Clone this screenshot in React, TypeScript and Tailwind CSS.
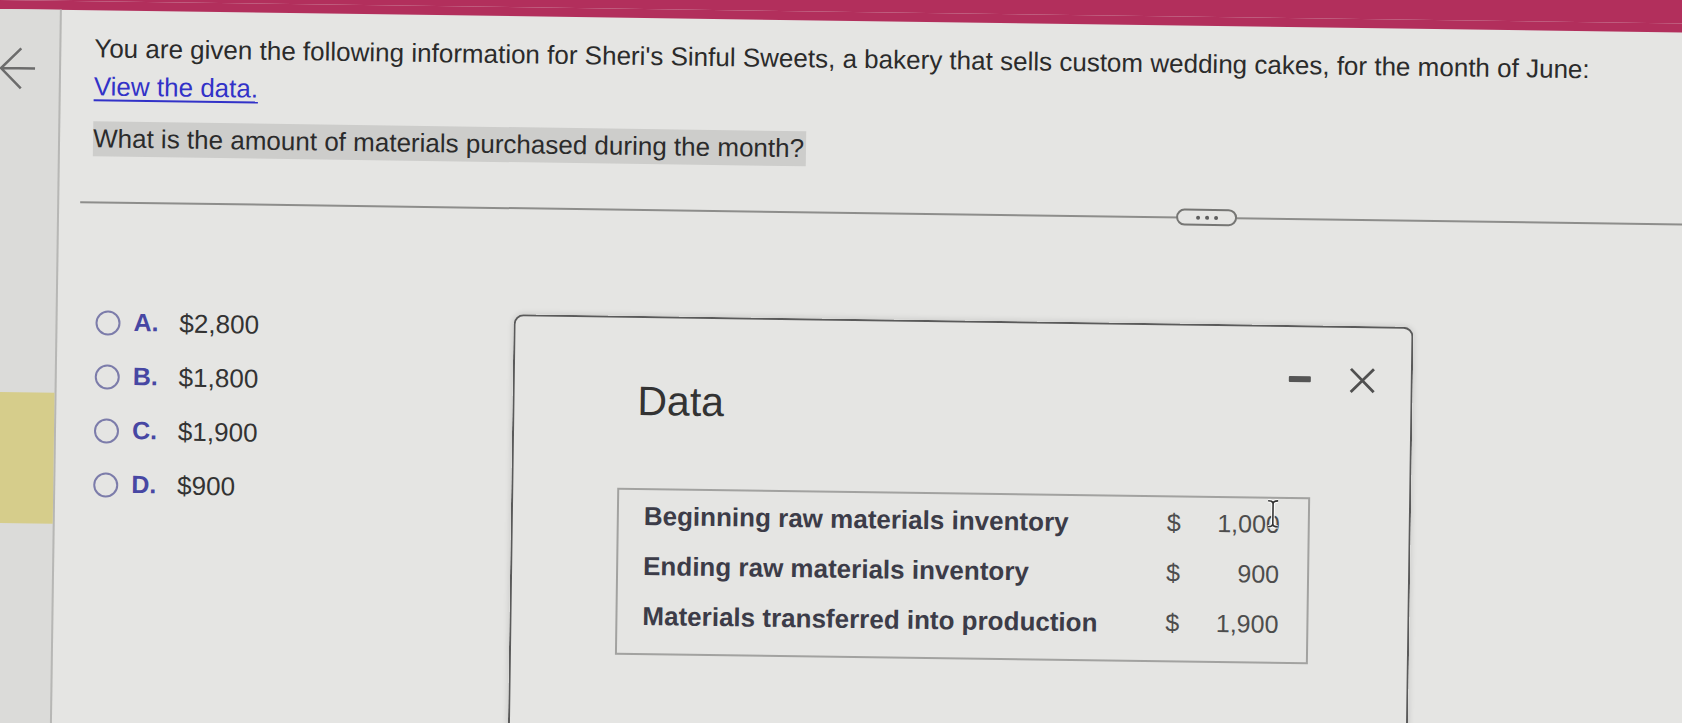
import React from "react";

const options = [
  { key: "A.", value: "$2,800" },
  { key: "B.", value: "$1,800" },
  { key: "C.", value: "$1,900" },
  { key: "D.", value: "$900" },
];

const rows = [
  { label: "Beginning raw materials inventory", amount: "1,000" },
  { label: "Ending raw materials inventory", amount: "900" },
  { label: "Materials transferred into production", amount: "1,900" },
];

export default function App() {
  return (
    <div className="h-[723px] w-[1682px] overflow-hidden bg-[#b22f5c] font-['Liberation_Sans',Arial,sans-serif]">
      {/* the photo is tilted a little, so the whole sheet is too */}
      <div className="h-[790px] w-[1780px] origin-top-left rotate-[0.8deg] bg-[#e5e5e3]">
        <div className="h-[9px] bg-[#b22f5c]" />

        <div className="flex h-[781px]">
          {/* ── Left rail ── */}
          <aside className="w-[62px] shrink-0 border-r-2 border-[#b7b7b5] bg-[#dbdbd9]">
            <svg width="40" height="44" viewBox="0 0 40 44" className="mt-[37px]">
              <path d="M2 22h34M22 2 2 22l20 20" fill="none" stroke="#6c6c6c" strokeWidth="2.5" />
            </svg>
            <div className="mt-[302px] h-[131px] bg-[#d6cd8b]" />
          </aside>

          {/* ── Question ── */}
          <main className="flex-1 pl-[33px] pt-[19px] text-[#2b2b2b]">
            <p className="whitespace-nowrap text-[26px] leading-[38px]">
              You are given the following information for Sheri's Sinful Sweets, a bakery that sells custom wedding cakes, for the month of June:
            </p>
            <a className="block w-fit text-[26px] leading-[38px] text-[#3232c8] underline decoration-2 underline-offset-[4px]">
              View the data.
            </a>
            <div className="mt-[16px]">
              <span className="inline-block bg-[#cdcdcb] pr-[2px] text-[26px] leading-[35px]">
                What is the amount of materials purchased during the month?
              </span>
            </div>

            <div className="relative -ml-[12px] mt-[45px] h-[2px] bg-[#8d8d8b]">
              <div className="absolute -top-[8px] left-[1096px] flex h-[17px] w-[61px] items-center justify-center gap-[5px] rounded-full border-2 border-[#767674] bg-[#e5e5e3]">
                <span className="size-[4px] rounded-full bg-[#5f5f5f]" />
                <span className="size-[4px] rounded-full bg-[#5f5f5f]" />
                <span className="size-[4px] rounded-full bg-[#5f5f5f]" />
              </div>
            </div>

            <div className="mt-[92px] flex items-start">
              {/* Choices */}
              <div className="w-[423px] shrink-0">
                {options.map((o) => (
                  <div key={o.key} className="flex h-[54px] items-center">
                    <span className="ml-[5px] size-[25px] rounded-full border-[2.5px] border-[#7c7caa]" />
                    <span className="ml-[13px] w-[46px] text-[25px] font-bold text-[#4747a3]">{o.key}</span>
                    <span className="text-[26px] text-[#333]">{o.value}</span>
                  </div>
                ))}
              </div>

              {/* Data dialog */}
              <div className="mt-[13px] h-[440px] w-[900px] shrink-0 rounded-t-[10px] border-2 border-b-0 border-[#5a5a5a] shadow-[0_0_6px_rgba(0,0,0,0.15)]">
                <div className="flex items-start justify-between">
                  <h2 className="pl-[123px] pt-[59px] text-[41px] leading-[48px] text-[#333]">Data</h2>
                  <div className="mt-[37px] flex h-[30px] items-center gap-[38px] pr-[35px]">
                    <span className="h-[6px] w-[22px] rounded-[1px] bg-[#555]" />
                    <svg width="27" height="27" viewBox="0 0 27 27">
                      <path d="M2 2l23 23M25 2 2 25" stroke="#505050" strokeWidth="2.8" fill="none" />
                    </svg>
                  </div>
                </div>

                <div className="relative ml-[104px] mt-[63px] w-[693px] border-2 border-[#a2a2a0] pb-[12px] pt-[1px]">
                  {rows.map((r) => (
                    <div key={r.label} className="flex h-[50px] items-center pl-[25px] pr-[28px]">
                      <span className="w-[523px] text-[26px] font-bold text-[#3c3c48]">{r.label}</span>
                      <span className="text-[25px] text-[#4d4d4d]">$</span>
                      <span className="flex-1 text-right text-[25px] text-[#4d4d4d]">{r.amount}</span>
                    </div>
                  ))}
                  {/* text cursor resting on the first amount */}
                  <svg width="16" height="30" viewBox="0 0 16 30" className="absolute left-[646px] top-[0px]">
                    <path d="M3 2c3 0 5 1 5 3v20c0 2-2 3-5 3M13 2c-3 0-5 1-5 3v20c0 2 2 3 5 3" fill="none" stroke="#fff" strokeWidth="3.5" />
                    <path d="M3 2c3 0 5 1 5 3v20c0 2-2 3-5 3M13 2c-3 0-5 1-5 3v20c0 2 2 3 5 3" fill="none" stroke="#333" strokeWidth="1.6" />
                  </svg>
                </div>
              </div>
            </div>
          </main>
        </div>
      </div>
    </div>
  );
}
